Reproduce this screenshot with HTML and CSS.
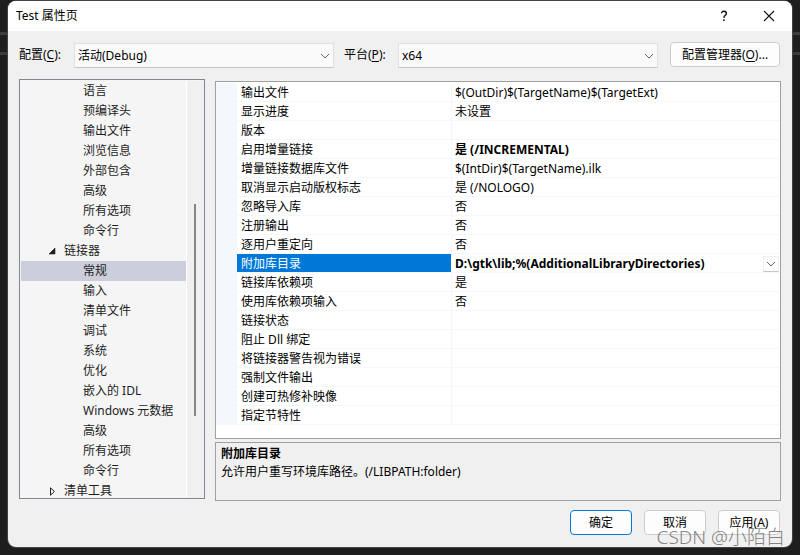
FILE: index.html
```html
<!DOCTYPE html>
<html lang="zh-CN">
<head>
<meta charset="utf-8">
<title>Test 属性页</title>
<link rel="stylesheet" href="styles.css">
</head>
<body>
<div class="backdrop-lines"></div>
<main class="dialog">
  <header class="titlebar">
    <h1 class="title">Test 属性页</h1>
    <button class="title-btn help" type="button" aria-label="?"><svg width="10" height="12" viewBox="0 0 10 12"><path d="M2.5 3.2C2.5 .6 7.4 .5 7.4 3.4C7.4 5.3 4.9 5.5 4.9 8" fill="none" stroke="#111" stroke-width="1.4"/><rect x="4.1" y="9.4" width="1.6" height="1.6" fill="#111"/></svg></button>
    <button class="title-btn" type="button" aria-label="关闭"><svg width="12" height="12" viewBox="0 0 12 12"><path d="M1 1L11 11M11 1L1 11" stroke="#111" stroke-width="1.1"/></svg></button>
  </header>
  <div class="content">
    <div class="config-row">
      <label class="label-config" for="config">配置(<u>C</u>):</label>
      <div class="combo">
        <select id="config"><option>活动(Debug)</option></select>
        <svg class="chevron" width="10" height="6" viewBox="0 0 10 6"><path d="M1 1L5 5L9 1" fill="none" stroke="#666" stroke-width="1"/></svg>
      </div>
      <label class="label-platform" for="platform">平台(<u>P</u>):</label>
      <div class="combo">
        <select id="platform"><option>x64</option></select>
        <svg class="chevron" width="10" height="6" viewBox="0 0 10 6"><path d="M1 1L5 5L9 1" fill="none" stroke="#666" stroke-width="1"/></svg>
      </div>
      <button class="btn manager" type="button">配置管理器(<u>O</u>)...</button>
    </div>
    <div class="panes">
      <nav class="tree">
        <ul class="tree-list">
          <li class="leaf">语言</li>
          <li class="leaf">预编译头</li>
          <li class="leaf">输出文件</li>
          <li class="leaf">浏览信息</li>
          <li class="leaf">外部包含</li>
          <li class="leaf">高级</li>
          <li class="leaf">所有选项</li>
          <li class="leaf">命令行</li>
          <li class="branch"><svg width="9" height="9" viewBox="0 0 9 9"><path d="M7 1V7H1Z" fill="#1e1e1e" stroke="#1e1e1e" stroke-width=".6"/></svg>链接器</li>
          <li class="leaf selected">常规</li>
          <li class="leaf">输入</li>
          <li class="leaf">清单文件</li>
          <li class="leaf">调试</li>
          <li class="leaf">系统</li>
          <li class="leaf">优化</li>
          <li class="leaf">嵌入的 IDL</li>
          <li class="leaf">Windows 元数据</li>
          <li class="leaf">高级</li>
          <li class="leaf">所有选项</li>
          <li class="leaf">命令行</li>
          <li class="branch"><svg width="9" height="9" viewBox="0 0 9 9"><path d="M2.5 .8V8.2L6.4 4.5Z" fill="none" stroke="#1e1e1e"/></svg>清单工具</li>
        </ul>
        <div class="scrollbar"><div class="thumb"></div></div>
      </nav>
      <div class="details">
        <div class="grid-box">
          <table class="props">
            <tbody>
              <tr><th scope="row">输出文件</th><td>$(OutDir)$(TargetName)$(TargetExt)</td></tr>
              <tr><th scope="row">显示进度</th><td>未设置</td></tr>
              <tr><th scope="row">版本</th><td></td></tr>
              <tr><th scope="row">启用增量链接</th><td class="strong">是 (/INCREMENTAL)</td></tr>
              <tr><th scope="row">增量链接数据库文件</th><td>$(IntDir)$(TargetName).ilk</td></tr>
              <tr><th scope="row">取消显示启动版权标志</th><td>是 (/NOLOGO)</td></tr>
              <tr><th scope="row">忽略导入库</th><td>否</td></tr>
              <tr><th scope="row">注册输出</th><td>否</td></tr>
              <tr><th scope="row">逐用户重定向</th><td>否</td></tr>
              <tr class="active"><th scope="row">附加库目录</th><td class="strong"><div class="editor"><span>D:\gtk\lib;%(AdditionalLibraryDirectories)</span><button class="drop" type="button" aria-label="编辑"><svg width="10" height="6" viewBox="0 0 10 6"><path d="M1 1L5 5L9 1" fill="none" stroke="#666" stroke-width="1"/></svg></button></div></td></tr>
              <tr><th scope="row">链接库依赖项</th><td>是</td></tr>
              <tr><th scope="row">使用库依赖项输入</th><td>否</td></tr>
              <tr><th scope="row">链接状态</th><td></td></tr>
              <tr><th scope="row">阻止 Dll 绑定</th><td></td></tr>
              <tr><th scope="row">将链接器警告视为错误</th><td></td></tr>
              <tr><th scope="row">强制文件输出</th><td></td></tr>
              <tr><th scope="row">创建可热修补映像</th><td></td></tr>
              <tr><th scope="row">指定节特性</th><td></td></tr>
            </tbody>
          </table>
        </div>
        <section class="description">
          <h2>附加库目录</h2>
          <p>允许用户重写环境库路径。(/LIBPATH:folder)</p>
        </section>
      </div>
    </div>
    <footer class="actions">
      <button class="btn primary" type="button">确定</button>
      <button class="btn" type="button">取消</button>
      <button class="btn" type="button">应用(A)</button>
    </footer>
  </div>
  <div class="watermark">CSDN @小陌白</div>
</main>
</body>
</html>
```
FILE: styles.css
```css
* { box-sizing: border-box; }

body {
  margin: 0;
  padding: 1px 8px 8px;
  background: #1e1e1e;
  color: #000;
  font: 12px/18px "Noto Sans", "Noto Sans CJK SC", sans-serif;
}

button, select { font: inherit; color: inherit; }
h1, h2, p, ul { margin: 0; padding: 0; font-size: inherit; font-weight: normal; }
u { text-underline-offset: 2px; }

.backdrop-lines {
  position: absolute;
  top: 32px;
  left: 0;
  right: 0;
  height: 23px;
  border: solid #3c3c3c;
  border-width: 3px 0;
}

.dialog {
  position: relative;
  background: #f0f0f0;
  border-radius: 8px;
  box-shadow: 0 0 0 1px #444;
}

.titlebar {
  display: flex;
  align-items: center;
  height: 30px;
  padding: 0 1px 0 8px;
  border-radius: 8px 8px 0 0;
  background: #fff;
}

.title { flex: 1; }

.title-btn {
  display: flex;
  align-items: center;
  justify-content: center;
  width: 45px;
  height: 30px;
  padding: 0;
  border: 0;
  background: none;
}

.content { padding: 11px 11px 12px; }

.config-row {
  display: flex;
  height: 26px;
  padding-right: 1px;
}

.config-row label { line-height: 26px; }
.label-config { width: 55px; }
.label-platform { width: 54px; margin-left: 10px; }

.combo { position: relative; flex: 1; padding-top: 1px; }

.combo select {
  appearance: none;
  display: block;
  width: 100%;
  height: 25px;
  padding: 0 3px;
  border: 1px solid #e0e0e0;
  border-bottom-color: #c6c6c6;
  border-radius: 1px;
  background: #fafafa;
}

.chevron {
  position: absolute;
  right: 4px;
  top: 11px;
  pointer-events: none;
}

.btn {
  width: 62px;
  height: 25px;
  padding: 0;
  border: 1px solid #cdcdcd;
  border-radius: 4px;
  background: #fdfdfd;
  text-align: center;
}

.btn.manager { width: 110px; margin-left: 12px; }
.btn.primary { border-color: #0078d4; }

.panes {
  display: flex;
  gap: 10px;
  margin-top: 11px;
}

.tree {
  display: flex;
  width: 186px;
  height: 420px;
  padding: 1px 0 0 1px;
  border: 1px solid #828790;
  background: #f5f5f5;
  color: #1e1e1e;
  overflow: hidden;
}

.tree-list { flex: 1; list-style: none; }
.tree-list li { height: 20px; line-height: 20px; white-space: nowrap; }
.leaf { padding-left: 62px; }
.branch { display: flex; align-items: center; gap: 7px; padding-left: 27px; }
.selected { background: #cccedb; }

.scrollbar {
  width: 18px;
  padding: 123px 0 0 7px;
  border-left: 1px solid #fff;
  background: #f0f0f0;
}

.thumb { width: 2px; height: 212px; background: #858585; }

.details { flex: 1; margin-top: 2px; min-width: 0; }

.grid-box {
  height: 358px;
  padding-top: 1px;
  border: 1px solid #a0a0a0;
  background: #fff;
}

.props {
  width: 100%;
  border-collapse: separate;
  border-spacing: 0;
  table-layout: fixed;
  border-left: 21px solid #f4f7fc;
}

.props th, .props td {
  height: 19px;
  padding: 2px 0 0 4px;
  border-bottom: 1px solid #f4f7fc;
  font-weight: normal;
  line-height: 16px;
  text-align: left;
  white-space: nowrap;
}

.props th { width: 215px; border-right: 1px solid #f4f7fc; }
.props td { padding-left: 3px; }
.props .strong { font-weight: bold; }
.props .active th { background: #0078d7; background-clip: padding-box; color: #fff; }

.editor { display: flex; justify-content: space-between; height: 16px; padding-right: 1px; }

.drop {
  display: flex;
  align-items: center;
  justify-content: center;
  width: 16px;
  height: 16px;
  padding: 0;
  border: 1px solid #f0f0f0;
  border-bottom-color: #c6c6c6;
  background: #fdfdfd;
}

.drop svg { flex: none; }

.description {
  height: 59px;
  margin-top: 3px;
  padding: 2px 5px;
  border: 1px solid #a0a0a0;
}

.description h2 { font-weight: bold; }

.actions {
  display: flex;
  justify-content: flex-end;
  gap: 12px;
  margin-top: 9px;
  padding-right: 1px;
}

.watermark {
  position: absolute;
  right: 7px;
  bottom: -4px;
  color: rgba(100, 100, 100, .8);
  font-size: 19px;
  font-weight: 300;
  line-height: 28px;
  pointer-events: none;
}
```
